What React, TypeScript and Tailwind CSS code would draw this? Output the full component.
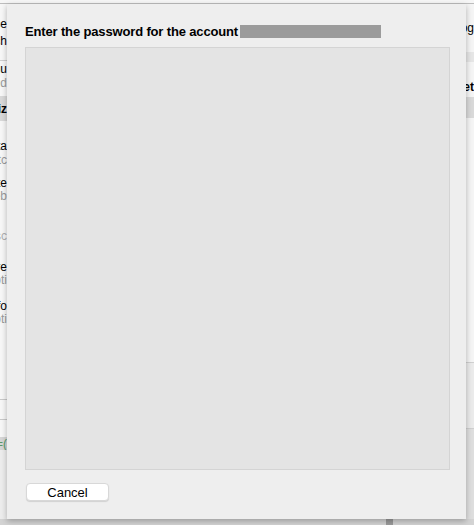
import React from 'react';

const StripRow: React.FC<{ h: string; text?: string; tone?: string; bg?: string; align?: string }> = ({
  h,
  text,
  tone,
  bg,
  align,
}) => (
  <div className={`flex justify-end overflow-hidden whitespace-nowrap ${align ?? 'items-center'} ${h} ${bg ?? ''}`}>
    {text && <span className={`text-[12px] leading-none ${tone ?? 'text-black'}`}>{text}</span>}
  </div>
);

export default function App() {
  return (
    <div
      className="w-[474px] h-[525px] overflow-hidden flex flex-col bg-[#f4f4f4]"
      style={{ fontFamily: '"Liberation Sans", Arial, sans-serif' }}
    >
      {/* window chrome above the sheet */}
      <div className="h-[3px] bg-[#f6f6f6]" />
      <div className="h-px bg-[#bdbdbd]" />

      <div className="flex flex-1 min-h-0">
        {/* left edge of the window behind */}
        <div className="w-[7px] flex flex-col bg-[#f7f7f7]">
          <StripRow h="h-[11px]" />
          <StripRow h="h-[18px]" text="Appearance" />
          <StripRow h="h-[16px]" text="Search" />
          <StripRow h="h-[11px]" />
          <div className="h-px bg-[#cfcfcf]" />
          <StripRow h="h-[16px]" text="Menu" />
          <StripRow h="h-[12px]" text="Cloud" tone="text-[#9a9a9a]" />
          <StripRow h="h-[7px]" />
          <StripRow h="h-[25px]" text="Quiz" tone="text-black font-bold" bg="bg-[#d9d9d9]" />
          <StripRow h="h-[18px]" />
          <StripRow h="h-[14px]" text="Data" />
          <StripRow h="h-[13px]" text="Etc" tone="text-[#9a9a9a]" />
          <StripRow h="h-[10px]" />
          <StripRow h="h-[13px]" text="Note" />
          <StripRow h="h-[13px]" text="Web" tone="text-[#9a9a9a]" />
          <StripRow h="h-[27px]" />
          <StripRow h="h-[14px]" text="Misc" tone="text-[#b0b0b0]" />
          <StripRow h="h-[17px]" />
          <StripRow h="h-[14px]" text="Share" />
          <StripRow h="h-[12px]" text="Opti" tone="text-[#9a9a9a]" />
          <StripRow h="h-[13px]" />
          <StripRow h="h-[13px]" text="Info" />
          <StripRow h="h-[13px]" text="Opti" tone="text-[#9a9a9a]" />
          <StripRow h="h-[74px]" />
          <div className="h-px bg-[#c9c9c9]" />
          <StripRow h="h-[19px]" />
          <div className="h-px bg-[#c9c9c9]" />
          <StripRow h="h-[17px]" />
          <StripRow h="h-[13px]" text="=(" tone="text-[#5a9a6a]" bg="bg-[#d6d6d6]" />
          <div className="flex-1 bg-[#ededed]" />
        </div>

        {/* sheet */}
        <div className="w-[459px] flex flex-col bg-[#eeeeee] shadow-[0_2px_6px_rgba(0,0,0,0.28)] pl-[18px] pr-[16px] pt-[20px] pb-[18px] z-10">
          <div className="flex items-center h-[14px] mb-[9px]">
            <span className="text-[13px] font-bold text-black tracking-[-0.15px] leading-none">
              Enter the password for the account
            </span>
            <span className="ml-[2px] w-[141px] h-[13px] bg-[#9b9b9b]" />
          </div>
          <div className="w-[425px] h-[423px] bg-[#e4e4e4] border border-[#d4d4d4]" />
          <div className="mt-[13px] flex">
            <button className="ml-px w-[83px] h-[18px] bg-white rounded-[4px] border border-[#d8d8d8] shadow-[0_1px_1px_rgba(0,0,0,0.12)] text-[13px] leading-none text-black">
              Cancel
            </button>
          </div>
        </div>

        {/* right edge of the window behind */}
        <div className="w-[8px] flex flex-col bg-[#f5f5f5]">
          <StripRow h="h-[14px]" />
          <StripRow h="h-[20px]" text="Log" />
          <StripRow h="h-[14px]" />
          <div className="h-[10px] bg-[#e6e6e6]" />
          <StripRow h="h-[35px]" text="Set" tone="text-black font-bold" align="items-end pb-[4px]" />
          <div className="h-[21px] bg-[#d9d9d9]" />
          <div className="flex-1" />
          <div className="h-px bg-[#d0d0d0]" />
          <div className="h-[65px] bg-[#ebebeb]" />
          <div className="h-px bg-[#cfcfcf]" />
          <div className="h-[90px] bg-[#dedede]" />
        </div>
      </div>

      {/* strip below the sheet */}
      <div className="h-[6px] flex bg-[#d3d3d3]">
        <div className="ml-[386px] w-[7px] bg-[#9a9a9a]" />
      </div>
    </div>
  );
}
